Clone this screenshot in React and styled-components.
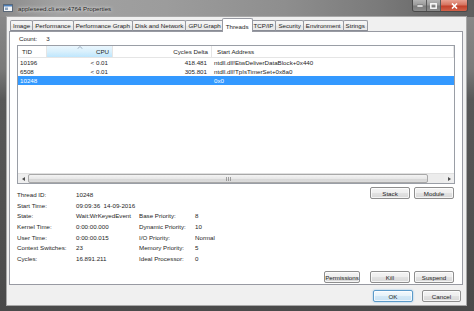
import React from "react";
import styled, { createGlobalStyle } from "styled-components";

// --- data ---
const tabs = [
  "Image",
  "Performance",
  "Performance Graph",
  "Disk and Network",
  "GPU Graph",
  "Threads",
  "TCP/IP",
  "Security",
  "Environment",
  "Strings",
];

const threads = [
  { tid: "10196", cpu: "< 0.01", cycles: "418.481", addr: "ntdll.dll!EtwDeliverDataBlock+0x440" },
  { tid: "6508", cpu: "< 0.01", cycles: "305.801", addr: "ntdll.dll!TpIsTimerSet+0x8a0" },
  { tid: "10248", cpu: "", cycles: "", addr: "0x0", selected: true },
];

const info = [
  ["Thread ID:", "10248"],
  ["Start Time:", "09:09:36  14-09-2016"],
  ["State:", "Wait:WrKeyedEvent", "Base Priority:", "8"],
  ["Kernel Time:", "0:00:00.000", "Dynamic Priority:", "10"],
  ["User Time:", "0:00:00.015", "I/O Priority:", "Normal"],
  ["Context Switches:", "23", "Memory Priority:", "5"],
  ["Cycles:", "16.891.211", "Ideal Processor:", "0"],
];

const App = () => {
  return (
    <>
      <GlobalStyle />
      <Window>
        <TitleBar>
          <TitleLeft>
            <AppIcon width="10" height="8" viewBox="0 0 10 8">
              <rect x="0.5" y="0.5" width="9" height="7" fill="#f4f6f8" stroke="#5a6878" />
              <rect x="1" y="1" width="8" height="1.5" fill="#4d7fb8" />
              <rect x="2" y="3.5" width="3" height="2.5" fill="#8fa6bf" />
            </AppIcon>
            <TitleText>appleseed.cli.exe:4764 Properties</TitleText>
          </TitleLeft>
          <CaptionGroup>
            <CaptionButton>
              <svg width="6" height="3" viewBox="0 0 6 3">
                <rect x="0" y="1" width="6" height="2" fill="#fff" stroke="#333" strokeWidth="0.4" />
              </svg>
            </CaptionButton>
            <CaptionButton>
              <svg width="7" height="6" viewBox="0 0 7 6">
                <rect x="0.8" y="0.8" width="5.4" height="4.4" fill="none" stroke="#fff" strokeWidth="1.4" />
              </svg>
            </CaptionButton>
            <CloseButton>
              <svg width="7" height="6" viewBox="0 0 7 6">
                <path d="M1 0.5 L6 5.5 M6 0.5 L1 5.5" stroke="#fff" strokeWidth="1.6" />
              </svg>
            </CloseButton>
          </CaptionGroup>
        </TitleBar>

        <FrameBody>
          <Client>
            <TabStrip>
              {tabs.map((t) => (
                <Tab key={t} $active={t === "Threads"}>
                  {t}
                </Tab>
              ))}
            </TabStrip>

            <TabPanel>
              <CountRow>
                <span>Count:</span>
                <span>3</span>
              </CountRow>

              <ListBox>
                <HeaderRow>
                  <HeaderCell>TID</HeaderCell>
                  <HeaderCell $right $sorted>
                    <SortArrow width="6" height="3" viewBox="0 0 6 3">
                      <path d="M0.5 2.8 L3 0.5 L5.5 2.8" fill="none" stroke="#98a9bb" strokeWidth="0.9" />
                    </SortArrow>
                    CPU
                  </HeaderCell>
                  <HeaderCell $right>Cycles Delta</HeaderCell>
                  <HeaderCell $pad={5}>Start Address</HeaderCell>
                </HeaderRow>

                <Rows>
                  {threads.map((r) => (
                    <DataRow key={r.tid} $selected={r.selected}>
                      <DataCell>{r.tid}</DataCell>
                      <DataCell $right>{r.cpu}</DataCell>
                      <DataCell $right>{r.cycles}</DataCell>
                      <DataCell>{r.addr}</DataCell>
                    </DataRow>
                  ))}
                </Rows>

                <HScroll>
                  <ScrollArrow>
                    <svg width="3" height="4" viewBox="0 0 3 4">
                      <path d="M3 0 L0 2 L3 4 Z" fill="#4d4d4d" />
                    </svg>
                  </ScrollArrow>
                  <ScrollThumb>
                    <svg width="5" height="4" viewBox="0 0 5 4">
                      <path d="M0.5 0 V4 M2.5 0 V4 M4.5 0 V4" stroke="#8a8a8a" strokeWidth="0.8" />
                    </svg>
                  </ScrollThumb>
                  <ScrollTrack />
                  <ScrollArrow>
                    <svg width="3" height="4" viewBox="0 0 3 4">
                      <path d="M0 0 L3 2 L0 4 Z" fill="#4d4d4d" />
                    </svg>
                  </ScrollArrow>
                </HScroll>
              </ListBox>

              <InfoArea>
                <InfoGrid>
                  {info.map((row) => (
                    <React.Fragment key={row[0]}>
                      <InfoText>{row[0]}</InfoText>
                      <InfoText>{row[1]}</InfoText>
                      <InfoText>{row[2] || ""}</InfoText>
                      <InfoText>{row[3] || ""}</InfoText>
                    </React.Fragment>
                  ))}
                </InfoGrid>
                <ButtonGroup>
                  <Button>Stack</Button>
                  <Button>Module</Button>
                </ButtonGroup>
              </InfoArea>

              <PanelButtons>
                <Button $w={36} $gap={6}>Permissions</Button>
                <Button>Kill</Button>
                <Button>Suspend</Button>
              </PanelButtons>
            </TabPanel>

            <DialogButtons>
              <Button $default>OK</Button>
              <Button $w={39}>Cancel</Button>
            </DialogButtons>
          </Client>
        </FrameBody>
      </Window>
    </>
  );
};

export default App;

// --- Styled Components ---

const GlobalStyle = createGlobalStyle`
  html, body {
    margin: 0;
    padding: 0;
    background: #3a3a3a;
  }
  body {
    font-family: "Liberation Sans", Arial, sans-serif;
    font-size: 6.2px;
    color: #1e1e1e;
  }
  * {
    box-sizing: border-box;
  }
`;

const Window = styled.div`
  width: 474px;
  height: 311px;
  display: flex;
  flex-direction: column;
  overflow: hidden;
  background: linear-gradient(180deg, #8c8c8c 0%, #7a7a7a 22%, #585858 32%, #4a4a4a 100%);
`;

const TitleBar = styled.div`
  height: 17px;
  flex-shrink: 0;
  display: flex;
  justify-content: space-between;
  align-items: flex-start;
  background: linear-gradient(
    90deg,
    #8a8a8a 0%,
    #a2a2a2 12%,
    #9c9c9c 35%,
    #8e8e8e 60%,
    #7a7a7a 80%,
    #5e5e5e 100%
  );
`;

const TitleLeft = styled.div`
  display: flex;
  align-items: center;
  gap: 5px;
  padding: 4px 0 0 3px;
`;

const AppIcon = styled.svg`
  display: block;
`;

const TitleText = styled.span`
  color: #1a1a1a;
  font-size: 6.2px;
  text-shadow: 0 0 4px rgba(255, 255, 255, 0.9), 0 0 2px rgba(255, 255, 255, 0.7);
`;

const CaptionGroup = styled.div`
  display: flex;
  margin-right: 6px;
  border: 1px solid #4a4a4a;
  border-top: none;
  border-radius: 0 0 3px 3px;
  overflow: hidden;
`;

const CaptionButton = styled.div`
  width: 14px;
  height: 11px;
  display: flex;
  align-items: center;
  justify-content: center;
  border-right: 1px solid #5a5a5a;
  background: linear-gradient(180deg, #b4b4b4 0%, #9a9a9a 45%, #7c7c7c 55%, #8c8c8c 100%);
`;

const CloseButton = styled.div`
  width: 26px;
  height: 11px;
  display: flex;
  align-items: center;
  justify-content: center;
  background: linear-gradient(180deg, #e8a293 0%, #d7735f 45%, #c2412b 55%, #d2624a 100%);
`;

const FrameBody = styled.div`
  flex: 1;
  display: flex;
  padding: 0 8px 6px 7px;
`;

const Client = styled.div`
  flex: 1;
  display: flex;
  flex-direction: column;
  background: #f0f0f0;
  padding-top: 1px;
  box-shadow: 0 0 0 1px #a8a8a8;
`;

const TabStrip = styled.div`
  display: flex;
  align-items: flex-end;
  height: 14px;
  padding-left: 4px;
  margin-bottom: -1px;
  position: relative;
  z-index: 1;
`;

const Tab = styled.div`
  height: ${(p) => (p.$active ? 14 : 11)}px;
  margin-bottom: ${(p) => (p.$active ? 0 : 1)}px;
  margin-left: ${(p) => (p.$active ? -2 : -1)}px;
  margin-right: ${(p) => (p.$active ? -1 : 0)}px;
  padding: ${(p) => (p.$active ? "2px 3px 0" : "0 2px")};
  display: flex;
  align-items: center;
  white-space: nowrap;
  border: 1px solid #989aa2;
  border-bottom: ${(p) => (p.$active ? "none" : "1px solid #898c95")};
  border-radius: 2px 2px 0 0;
  background: ${(p) =>
    p.$active ? "#ffffff" : "linear-gradient(180deg, #f7f7f7 0%, #efefef 50%, #e5e5e5 51%, #ebebeb 100%)"};
  position: relative;
  z-index: ${(p) => (p.$active ? 2 : 0)};
`;

const TabPanel = styled.div`
  height: 254px;
  margin: 0 3px 0 2px;
  display: flex;
  flex-direction: column;
  background: #ffffff;
  border: 1px solid #989aa2;
  padding: 2px 7px 1px 7px;
`;

const CountRow = styled.div`
  height: 8px;
  display: flex;
  align-items: center;
  gap: 9px;
  padding-left: 2px;
`;

const ListBox = styled.div`
  margin-top: 3px;
  height: 139px;
  display: flex;
  flex-direction: column;
  border: 1px solid #9a9ea6;
  background: #fff;
`;

const HeaderRow = styled.div`
  height: 12px;
  display: grid;
  grid-template-columns: 29px 66px 99px 1fr;
  border-bottom: 1px solid #e5e5e5;
`;

const HeaderCell = styled.div`
  position: relative;
  display: flex;
  align-items: center;
  justify-content: ${(p) => (p.$right ? "flex-end" : "flex-start")};
  padding: ${(p) => (p.$right ? "0 3px 0 0" : `0 0 0 ${p.$pad || 4}px`)};
  border-right: 1px solid #e5e5e5;
  background: ${(p) => (p.$sorted ? "linear-gradient(180deg, #eaf6fd 0%, #d9f0fc 50%, #bee6fd 100%)" : "#ffffff")};
  white-space: nowrap;
`;

const SortArrow = styled.svg`
  position: absolute;
  top: 0;
  left: 30px;
`;

const Rows = styled.div`
  flex: 1;
  display: flex;
  flex-direction: column;
`;

const DataRow = styled.div`
  height: 9px;
  display: grid;
  grid-template-columns: 29px 66px 99px 1fr;
  align-items: center;
  background: ${(p) => (p.$selected ? "#3399ff" : "transparent")};
  color: ${(p) => (p.$selected ? "#ffffff" : "#1e1e1e")};
`;

const DataCell = styled.div`
  white-space: nowrap;
  text-align: ${(p) => (p.$right ? "right" : "left")};
  padding: ${(p) => (p.$right ? "0 5px 0 0" : "0 0 0 2px")};
`;

const HScroll = styled.div`
  height: 10px;
  display: flex;
  background: #eaeaea;
  border-top: 1px solid #e0e0e0;
`;

const ScrollArrow = styled.div`
  width: 10px;
  display: flex;
  align-items: center;
  justify-content: center;
  background: #eeeeee;
`;

const ScrollThumb = styled.div`
  width: 400px;
  display: flex;
  align-items: center;
  justify-content: center;
  border: 1px solid #a8a8a8;
  border-radius: 2px;
  background: linear-gradient(180deg, #f4f4f4 0%, #e8e8e8 50%, #d6d6d6 51%, #dcdcdc 100%);
`;

const ScrollTrack = styled.div`
  flex: 1;
  background: #ececec;
`;

const InfoArea = styled.div`
  margin-top: 3px;
  display: flex;
  justify-content: space-between;
  align-items: flex-start;
`;

const InfoGrid = styled.div`
  padding-top: 2px;
  display: grid;
  grid-template-columns: 59px 63px 56px 40px;
  grid-auto-rows: 10.7px;
  align-items: center;
`;

const InfoText = styled.div`
  white-space: pre;
`;

const ButtonGroup = styled.div`
  display: flex;
  gap: 4px;
  margin-right: 1px;
`;

const PanelButtons = styled.div`
  margin-top: auto;
  display: flex;
  justify-content: flex-end;
  gap: 4px;
  padding-right: 1px;
`;

const DialogButtons = styled.div`
  margin-top: 5px;
  display: flex;
  justify-content: flex-end;
  gap: 9px;
  padding-right: 5px;
`;

const Button = styled.button`
  width: ${(p) => p.$w || 40}px;
  height: 12px;
  margin-right: ${(p) => p.$gap || 0}px;
  padding: 0;
  font: inherit;
  color: #1e1e1e;
  border: 1px solid ${(p) => (p.$default ? "#5b9ac9" : "#8e8e8e")};
  border-radius: 2px;
  background: ${(p) =>
    p.$default
      ? "linear-gradient(180deg, #f2f9fd 0%, #e6f2fa 50%, #d3e8f6 51%, #c9e2f4 100%)"
      : "linear-gradient(180deg, #f4f4f4 0%, #eeeeee 50%, #e2e2e2 51%, #d8d8d8 100%)"};
  box-shadow: inset 0 0 0 1px rgba(255, 255, 255, 0.7)
    ${(p) => (p.$default ? ", 0 0 2px rgba(90, 170, 230, 0.7)" : "")};
`;
